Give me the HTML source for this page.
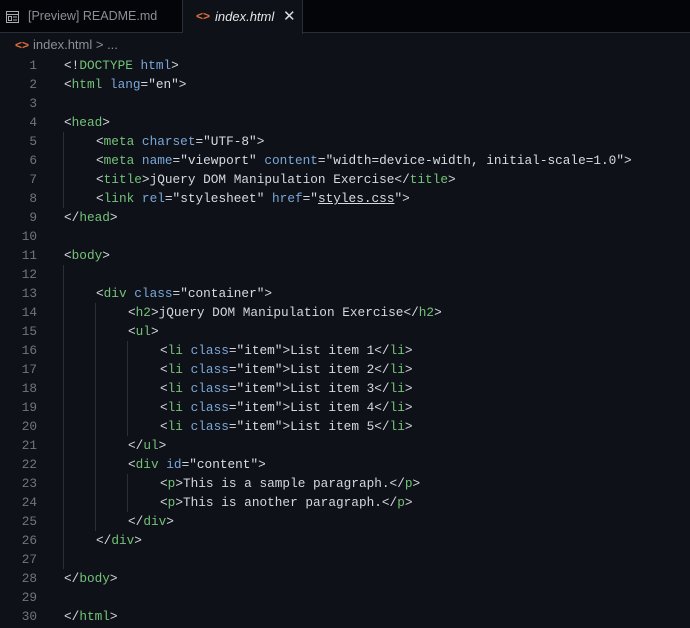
<!DOCTYPE html>
<html><head><meta charset="utf-8"><style>
body{margin:0;width:690px;height:628px;background:#0e1117;overflow:hidden;font-family:"Liberation Sans",sans-serif;position:relative}
.tabs{position:absolute;left:0;top:0;width:690px;height:33px;background:#030508;border-bottom:1px solid #2a2e36;box-sizing:border-box}
.tab{position:absolute;top:0;height:33px;font-size:13px;line-height:33px;color:#8b8f97;box-sizing:border-box}
.t1{left:0;width:183px;border-right:1px solid #2a2e36;padding-left:28px;font-size:12.5px}
.t2{left:183px;width:120px;background:#0e1117;height:34px;border-right:1px solid #2a2e36;color:#e6e6e6;font-style:italic;padding-left:32px}
.crumb{position:absolute;top:36px;left:33px;font-size:13px;color:#8b8f97;line-height:18px}
.code{position:absolute;top:56px;left:0;font-family:"Liberation Mono",monospace;font-size:12.75px;color:#d4d7dd}
.l{height:19px;line-height:19px;position:relative;white-space:pre}
.n{position:absolute;left:0;width:37px;text-align:right;color:#6e7681}
.c{position:absolute}
.g{position:absolute;top:0;width:1px;height:19px;background:#2b3038}
.t{color:#74c279}.a{color:#7aa6d8}.s{color:#d6dbe2}
.u{text-decoration:underline}
</style></head><body>
<div class="tabs">
<div class="tab t1"><svg style="position:absolute;left:6px;top:11px" width="13" height="12" viewBox="0 0 13 12"><rect x="0.5" y="0.5" width="12" height="11" fill="none" stroke="#aaa"/><line x1="0.5" y1="3.5" x2="12.5" y2="3.5" stroke="#aaa"/><rect x="2.5" y="5.5" width="3" height="4" fill="none" stroke="#aaa"/><line x1="7" y1="6" x2="11" y2="6" stroke="#aaa"/><line x1="7" y1="9" x2="11" y2="9" stroke="#aaa"/></svg>[Preview] README.md</div>
<div class="tab t2"><span style="position:absolute;left:13px;top:0;color:#e0703a;font-style:normal;font-weight:bold;font-size:12px">&lt;&gt;</span>index.html<span style="position:absolute;left:100px;font-style:normal;font-size:15px;color:#ddd">✕</span></div>
</div>
<div class="crumb"><span style="position:absolute;left:-18px;color:#e0703a;font-weight:bold;font-size:12px">&lt;&gt;</span>index.html &gt; ...</div>
<div class="code">
<div class="l"><span class="n">1</span><span class="c" style="left:64px">&lt;!<span class="t">DOCTYPE</span> <span class="a">html</span>&gt;</span></div>
<div class="l"><span class="n">2</span><span class="c" style="left:64px">&lt;<span class="t">html</span> <span class="a">lang</span>=<span class="s">"en"</span>&gt;</span></div>
<div class="l"><span class="n">3</span></div>
<div class="l"><span class="n">4</span><span class="c" style="left:64px">&lt;<span class="t">head</span>&gt;</span></div>
<div class="l"><span class="n">5</span><i class="g" style="left:63px"></i><span class="c" style="left:96px">&lt;<span class="t">meta</span> <span class="a">charset</span>=<span class="s">"UTF-8"</span>&gt;</span></div>
<div class="l"><span class="n">6</span><i class="g" style="left:63px"></i><span class="c" style="left:96px">&lt;<span class="t">meta</span> <span class="a">name</span>=<span class="s">"viewport"</span> <span class="a">content</span>=<span class="s">"width=device-width, initial-scale=1.0"</span>&gt;</span></div>
<div class="l"><span class="n">7</span><i class="g" style="left:63px"></i><span class="c" style="left:96px">&lt;<span class="t">title</span>&gt;jQuery DOM Manipulation Exercise&lt;/<span class="t">title</span>&gt;</span></div>
<div class="l"><span class="n">8</span><i class="g" style="left:63px"></i><span class="c" style="left:96px">&lt;<span class="t">link</span> <span class="a">rel</span>=<span class="s">"stylesheet"</span> <span class="a">href</span>=<span class="s">"<span class="u">styles.css</span>"</span>&gt;</span></div>
<div class="l"><span class="n">9</span><span class="c" style="left:64px">&lt;/<span class="t">head</span>&gt;</span></div>
<div class="l"><span class="n">10</span></div>
<div class="l"><span class="n">11</span><span class="c" style="left:64px">&lt;<span class="t">body</span>&gt;</span></div>
<div class="l"><span class="n">12</span><i class="g" style="left:63px"></i></div>
<div class="l"><span class="n">13</span><i class="g" style="left:63px"></i><span class="c" style="left:96px">&lt;<span class="t">div</span> <span class="a">class</span>=<span class="s">"container"</span>&gt;</span></div>
<div class="l"><span class="n">14</span><i class="g" style="left:63px"></i><i class="g" style="left:95px"></i><span class="c" style="left:128px">&lt;<span class="t">h2</span>&gt;jQuery DOM Manipulation Exercise&lt;/<span class="t">h2</span>&gt;</span></div>
<div class="l"><span class="n">15</span><i class="g" style="left:63px"></i><i class="g" style="left:95px"></i><span class="c" style="left:128px">&lt;<span class="t">ul</span>&gt;</span></div>
<div class="l"><span class="n">16</span><i class="g" style="left:63px"></i><i class="g" style="left:95px"></i><i class="g" style="left:127px"></i><span class="c" style="left:160px">&lt;<span class="t">li</span> <span class="a">class</span>=<span class="s">"item"</span>&gt;List item 1&lt;/<span class="t">li</span>&gt;</span></div>
<div class="l"><span class="n">17</span><i class="g" style="left:63px"></i><i class="g" style="left:95px"></i><i class="g" style="left:127px"></i><span class="c" style="left:160px">&lt;<span class="t">li</span> <span class="a">class</span>=<span class="s">"item"</span>&gt;List item 2&lt;/<span class="t">li</span>&gt;</span></div>
<div class="l"><span class="n">18</span><i class="g" style="left:63px"></i><i class="g" style="left:95px"></i><i class="g" style="left:127px"></i><span class="c" style="left:160px">&lt;<span class="t">li</span> <span class="a">class</span>=<span class="s">"item"</span>&gt;List item 3&lt;/<span class="t">li</span>&gt;</span></div>
<div class="l"><span class="n">19</span><i class="g" style="left:63px"></i><i class="g" style="left:95px"></i><i class="g" style="left:127px"></i><span class="c" style="left:160px">&lt;<span class="t">li</span> <span class="a">class</span>=<span class="s">"item"</span>&gt;List item 4&lt;/<span class="t">li</span>&gt;</span></div>
<div class="l"><span class="n">20</span><i class="g" style="left:63px"></i><i class="g" style="left:95px"></i><i class="g" style="left:127px"></i><span class="c" style="left:160px">&lt;<span class="t">li</span> <span class="a">class</span>=<span class="s">"item"</span>&gt;List item 5&lt;/<span class="t">li</span>&gt;</span></div>
<div class="l"><span class="n">21</span><i class="g" style="left:63px"></i><i class="g" style="left:95px"></i><span class="c" style="left:128px">&lt;/<span class="t">ul</span>&gt;</span></div>
<div class="l"><span class="n">22</span><i class="g" style="left:63px"></i><i class="g" style="left:95px"></i><span class="c" style="left:128px">&lt;<span class="t">div</span> <span class="a">id</span>=<span class="s">"content"</span>&gt;</span></div>
<div class="l"><span class="n">23</span><i class="g" style="left:63px"></i><i class="g" style="left:95px"></i><i class="g" style="left:127px"></i><span class="c" style="left:160px">&lt;<span class="t">p</span>&gt;This is a sample paragraph.&lt;/<span class="t">p</span>&gt;</span></div>
<div class="l"><span class="n">24</span><i class="g" style="left:63px"></i><i class="g" style="left:95px"></i><i class="g" style="left:127px"></i><span class="c" style="left:160px">&lt;<span class="t">p</span>&gt;This is another paragraph.&lt;/<span class="t">p</span>&gt;</span></div>
<div class="l"><span class="n">25</span><i class="g" style="left:63px"></i><i class="g" style="left:95px"></i><span class="c" style="left:128px">&lt;/<span class="t">div</span>&gt;</span></div>
<div class="l"><span class="n">26</span><i class="g" style="left:63px"></i><span class="c" style="left:96px">&lt;/<span class="t">div</span>&gt;</span></div>
<div class="l"><span class="n">27</span><i class="g" style="left:63px"></i></div>
<div class="l"><span class="n">28</span><span class="c" style="left:64px">&lt;/<span class="t">body</span>&gt;</span></div>
<div class="l"><span class="n">29</span></div>
<div class="l"><span class="n">30</span><span class="c" style="left:64px">&lt;/<span class="t">html</span>&gt;</span></div>
</div>
</body></html>
